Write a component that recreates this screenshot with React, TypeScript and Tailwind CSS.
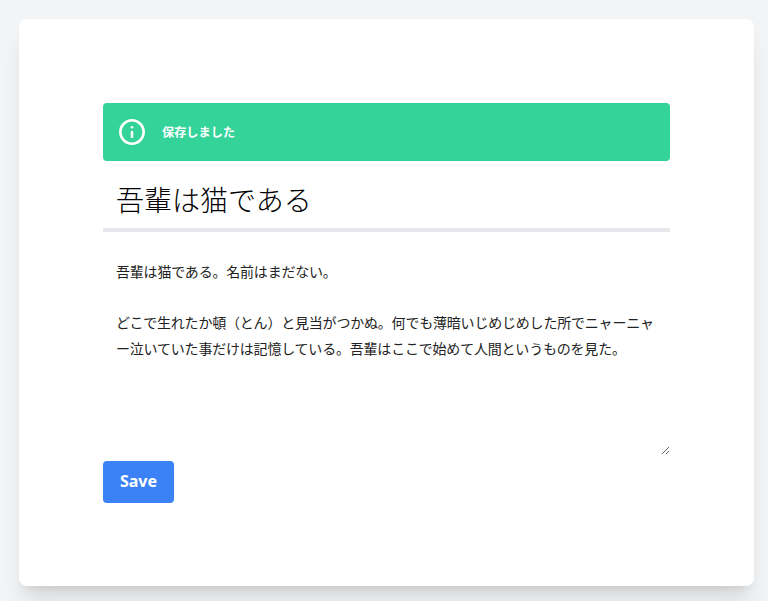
import { Info } from "lucide-react";

const body = `吾輩は猫である。名前はまだない。

どこで生れたか頓（とん）と見当がつかぬ。何でも薄暗いじめじめした所でニャーニャー泣いていた事だけは記憶している。吾輩はここで始めて人間というものを見た。`;

export default function App() {
  return (
    <div className="h-[601px] overflow-hidden bg-gray-100 p-[19px] font-['Noto_Sans_CJK_JP',sans-serif]">
      <div className="h-[567px] w-[735px] rounded-lg bg-white p-[84px] shadow-xl">
        {/* Alert */}
        <div className="flex h-[58px] items-center gap-4 rounded bg-[#34d399] pl-[15px] text-white">
          <Info size={28} strokeWidth={2.2} />
          <span className="text-[12.2px] font-bold">保存しました</span>
        </div>

        {/* Title */}
        <input
          className="block h-[71px] w-full border-b-4 border-[#e5e7eb] px-[13px] pt-2 text-[28px] font-light text-black outline-none"
          defaultValue="吾輩は猫である"
        />

        {/* Body */}
        <textarea
          className="mb-1.5 block h-[223px] w-full px-[13px] py-[27px] text-sm leading-[25.5px] tracking-[-0.2px] text-[#222] outline-none"
          defaultValue={body}
        />

        <button className="block h-[42px] w-[71px] rounded bg-[#3b82f6] pb-0.5 font-['Noto_Sans',sans-serif] text-base font-bold text-white">
          Save
        </button>
      </div>
    </div>
  );
}
